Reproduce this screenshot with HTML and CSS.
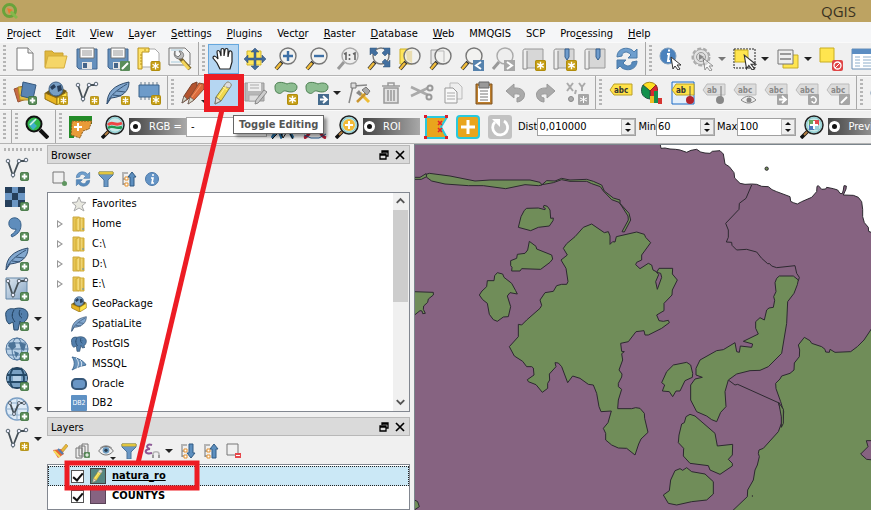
FILE: index.html
```html
<!DOCTYPE html>
<html lang="en">
<head>
<meta charset="utf-8">
<title>QGIS</title>
<link rel="stylesheet" href="styles.css">
</head>
<body>
<svg class="sprite" aria-hidden="true">
  <defs>
    <linearGradient id="steel" x1="0" y1="0" x2="1" y2="1"><stop offset="0" stop-color="#dfe8f1"/><stop offset="1" stop-color="#86a5c4"/></linearGradient>
    <linearGradient id="gold" x1="0" x2="1"><stop offset="0" stop-color="#e8c544"/><stop offset=".5" stop-color="#fbe9a0"/><stop offset="1" stop-color="#d9b02c"/></linearGradient>
  </defs>
  <symbol id="b-plus" viewBox="0 0 10 10"><rect x=".5" y=".5" width="9" height="9" rx="1.5" fill="#5a8c5a" stroke="#3f7440"/><path d="M5 2v6M2 5h6" stroke="#fff" stroke-width="2"/></symbol>
  <symbol id="b-star" viewBox="0 0 10 10"><rect x=".5" y=".5" width="9" height="9" rx="1" fill="#c8a117" stroke="#b08c0c"/><path d="M5 1.5v7M2 3.2l6 3.6M8 3.2l-6 3.6" stroke="#fff" stroke-width="1.3"/></symbol>
  <symbol id="b-gray" viewBox="0 0 10 10"><rect width="10" height="10" rx="1" fill="#a6a6a6"/></symbol>
  <symbol id="lens" viewBox="0 0 24 24"><path d="M8 15l-6 7" stroke="#303030" stroke-width="4"/><path d="M7 16l-5 6" stroke="#f1bd3c" stroke-width="2.5"/><circle cx="14" cy="9" r="8" fill="#f2f2f0" fill-opacity=".9" stroke="#777" stroke-width="1.4"/></symbol>
  <symbol id="lens-gray" viewBox="0 0 24 24"><path d="M8 15l-6 7" stroke="#999" stroke-width="3"/><circle cx="14" cy="9" r="8" fill="#eee" stroke="#aaa" stroke-width="1.4"/></symbol>
  <symbol id="lens-bold" viewBox="0 0 24 24"><path d="M8 16l-7 7" stroke="#111" stroke-width="3.5"/><path d="M8 16l-4 4" stroke="#b27d40" stroke-width="2"/><circle cx="14" cy="10" r="9" fill="#c9e8e7" stroke="#222" stroke-width="1.5"/><circle cx="14" cy="10" r="7.3" fill="none" stroke="#7bc8ce"/></symbol>
  <symbol id="new" viewBox="0 0 24 24"><path d="M4 1h11l5 5v17H4z" fill="#fff" stroke="#777"/><path d="M15 1v5h5" fill="#eee" stroke="#777"/></symbol>
  <symbol id="open" viewBox="0 0 24 24"><path d="M1 20V4h7l2 2h9v4" fill="#e0b83e" stroke="#c9a130"/><path d="M1 21L4 9h19l-3 12z" fill="#f5d668" stroke="#d4ad3d"/></symbol>
  <symbol id="save" viewBox="0 0 24 24"><path d="M2 2h20v20H4l-2-2z" fill="#6590bd" stroke="#436690"/><path d="M5 1h14v10H5z" fill="#fbfbfb" stroke="#777"/><path d="M7 4h10M7 6h10M7 8h10" stroke="#999"/><path d="M7 15h10v7H7z" fill="#e5e5e5"/><path d="M8 16h4v5H8z" fill="#44648a"/></symbol>
  <symbol id="saveas" viewBox="0 0 24 24"><use href="#save"/><rect x="14" y="14" width="10" height="10" rx="1" fill="#5a8c5a"/><path d="M16 22l6-6" stroke="#fff" stroke-width="2"/></symbol>
  <symbol id="layout" viewBox="0 0 24 24"><path d="M4 2h14l4 4v14H4z" fill="#fff" stroke="#aaa"/><path d="M1 1h11v4H5v17H1z" fill="#ffe36b" stroke="#b8921c"/><path d="M3 8h2M3 11h2M3 14h2M3 17h2M8 2v2" stroke="#b8921c"/><use href="#b-star" x="13" y="14" width="11" height="10"/></symbol>
  <symbol id="wrench" viewBox="0 0 24 24"><path d="M1 1h16l5 5v12H1z" fill="#f5f5f5" stroke="#777"/><path d="M3 3h12M3 15h14" stroke="#a6cadb"/><path d="M12 11l10 11" stroke="#776127" stroke-width="4"/><path d="M14 14l7 8" stroke="#f3d458" stroke-width="3"/><path d="M7 4v4l3 2 3-3-2-3c6 0 6 8 1 8-5 0-7-4-5-8z" fill="#bbb" stroke="#777"/></symbol>
  <symbol id="hand" viewBox="0 0 24 24"><path d="M8 22l-3-6-4-5c0-3 3-2 5 1L5 5c0-2 2-2 3 0l1 4V3c0-2 3-2 3 0v6l1-6c0-2 3-2 3 0v7l1-5c1-2 3-1 3 1v9l-2 7z" fill="#fff" stroke="#222" stroke-width="1.2"/></symbol>
  <symbol id="pan" viewBox="0 0 24 24"><path d="M4 4h14v14H4z" fill="#ffe65b" stroke="#d1b52c"/><path d="M12 1l4 4h-3v6h6V8l4 4-4 4v-3h-6v6h3l-4 4-4-4h3v-6H5v3l-4-4 4-4v3h6V5H8z" fill="#426b9a" stroke="#304d70" stroke-width=".5"/></symbol>
  <symbol id="zin" viewBox="0 0 24 24"><use href="#lens"/><path d="M14 4v10M9 9h10" stroke="#3d70a6" stroke-width="2.4"/></symbol>
  <symbol id="zout" viewBox="0 0 24 24"><use href="#lens"/><path d="M9 9h10" stroke="#3d70a6" stroke-width="2.4"/></symbol>
  <symbol id="z11" viewBox="0 0 24 24"><use href="#lens-gray"/><path d="M8 7l2-1v7M17 7l2-1v7M13.500 7v2M13.500 11v2" fill="none" stroke="#666" stroke-width="1.6"/></symbol>
  <symbol id="zfull" viewBox="0 0 24 24"><use href="#lens"/><path d="M3 1h7L8 3l3 3-3 3-3-3-2 2zM23 1v7l-2-2-3 3-3-3 3-3-2-2zM23 20h-7l2-2-3-3 3-3 3 3 2-2z" fill="#426f9f" stroke="#315579" stroke-width=".5"/></symbol>
  <symbol id="zsel" viewBox="0 0 24 24"><path d="M2 2h12v15H2z" fill="#ffe55a" stroke="#cdb126"/><use href="#lens"/><path d="M8 4h6v12l-5-3z" fill="#e9ddb1"/></symbol>
  <symbol id="zlayer" viewBox="0 0 24 24"><path d="M2 3h13v14H2z" fill="#e8e8e8" stroke="#999"/><use href="#lens"/><path d="M9 4h6v11" fill="none" stroke="#bbb"/></symbol>
  <symbol id="zlast" viewBox="0 0 24 24"><use href="#lens"/><path d="M13 13h11v11H13z" fill="#5682ad"/><path d="M21 15l-5 3.500 5 3.500" fill="none" stroke="#fff" stroke-width="2"/></symbol>
  <symbol id="znext" viewBox="0 0 24 24"><use href="#lens-gray"/><path d="M13 13h11v11H13z" fill="#a8a8a8"/><path d="M16 15l5 3.500-5 3.500" fill="none" stroke="#fff" stroke-width="2"/></symbol>
  <symbol id="book" viewBox="0 0 24 24"><path d="M4 2h17v19H4z" fill="#d7d7d7" stroke="#999"/><path d="M4 2c-3 0-3 1-3 3v17h4V4" fill="#eee" stroke="#888"/></symbol>
  <symbol id="bookstar" viewBox="0 0 24 24"><use href="#book"/><use href="#b-star" x="13" y="13" width="11" height="11"/></symbol>
  <symbol id="bookpin" viewBox="0 0 24 24"><use href="#book"/><path d="M12 2h4v8l-2 3-2-3z" fill="#6f9ccc" stroke="#345f8e"/></symbol>
  <symbol id="bookboth" viewBox="0 0 24 24"><use href="#bookpin"/><use href="#b-star" x="13" y="13" width="11" height="11"/></symbol>
  <symbol id="refresh" viewBox="0 0 24 24"><path d="M2 10C2 0 15-1 19 5l3-3v9h-9l3-3C12 3 7 5 7 9z" fill="#6f9fce" stroke="#4b7aa8"/><path d="M22 14c0 10-13 11-17 5l-3 3v-9h9l-3 3c4 5 9 3 9-1z" fill="#588bbd" stroke="#4b7aa8"/></symbol>
  <symbol id="cursor" viewBox="0 0 12 14"><path d="M1 1l10 8H7l3 4-2 1-3-4-2 3z" fill="#fff" stroke="#333"/></symbol>
  <symbol id="identify" viewBox="0 0 24 24"><circle cx="9" cy="9" r="8" fill="#4b82bd" stroke="#7f9dbb"/><path d="M9 3.500h2M8 7h2l-1 7h2" fill="none" stroke="#fff" stroke-width="2"/><use href="#cursor" x="11" y="9" width="12" height="14"/></symbol>
  <symbol id="gear" viewBox="0 0 24 24"><circle cx="11" cy="10" r="8.500" fill="#e6e6e6" stroke="#aaa" stroke-width="2" stroke-dasharray="4 2"/><circle cx="11" cy="10" r="7.500" fill="#e2e2e2" stroke="#aaa"/><circle cx="11" cy="10" r="4.500" fill="#ddd" stroke="#999"/><path d="M9 7l5 3-5 3z" fill="#888"/><g opacity=".5"><use href="#cursor" x="12" y="10" width="12" height="14"/></g></symbol>
  <symbol id="select" viewBox="0 0 24 24"><path d="M1 2h21v19H1z" fill="none" stroke="#222" stroke-dasharray="2 1"/><path d="M2 3h13v12H2z" fill="#ffe54f" stroke="#c8ad20"/><use href="#cursor" x="10" y="7" width="14" height="16"/></symbol>
  <symbol id="form" viewBox="0 0 24 24"><path d="M7 8h15v13H7z" fill="#ffe54f" stroke="#c7ad28"/><path d="M2 3h15v14H2z" fill="#eee" stroke="#777"/><path d="M4 7h11M4 12h11" stroke="#999" stroke-width="2"/></symbol>
  <symbol id="deselect" viewBox="0 0 24 24"><path d="M1 1h14v14H1z" fill="#ffe54f" stroke="#c8ad20"/><rect x="13" y="13" width="11" height="11" rx="2" fill="#df4546"/><circle cx="18.500" cy="18.500" r="3.500" fill="none" stroke="#fff" stroke-width="1.300"/><path d="M16 21l5-5" stroke="#fff"/></symbol>
  <symbol id="table" viewBox="0 0 24 24"><path d="M2 2h22v20H2z" fill="#fff" stroke="#6b8fb5"/><path d="M2 2h22v5H2z" fill="#5b8dc2"/><path d="M5 10h5M5 13h5M5 16h5M5 19h5M13 10h8M13 13h8M13 16h8M13 19h8" stroke="#8daecb"/></symbol>
  <symbol id="layers" viewBox="0 0 24 24"><path d="M1 8l12-4 3 13-11 4z" fill="#c76b42" stroke="#985236"/><path d="M5 6h13v13H7z" fill="#e3bf46" stroke="#b28d21"/><path d="M10 1l13 3-3 14-12-3z" fill="#5984b3" stroke="#35597f"/><use href="#b-plus" x="15" y="15" width="9" height="9"/></symbol>
  <symbol id="geopkg" viewBox="0 0 24 24"><path d="M1 12l11-8 11 6-9 9z" fill="#705a16"/><circle cx="12" cy="8" r="7" fill="#789fc5" stroke="#416286"/><path d="M6 6l4-3 2 3-4 3zM13 5l4-1 1 5-4 2z" fill="#283e5a"/><path d="M1 12l12 5v7L1 18z" fill="#e7b321" stroke="#8f6c10"/><path d="M13 17l10-6v7l-10 6z" fill="#ffe44a" stroke="#a17d15"/></symbol>
  <symbol id="newgeo" viewBox="0 0 24 24"><use href="#geopkg"/><use href="#b-star" x="15" y="15" width="9" height="9"/></symbol>
  <symbol id="vee" viewBox="0 0 24 24"><path d="M3 4l5 15 6-15h7" fill="none" stroke="#454f57" stroke-width="1.800"/><g fill="#eef" stroke="#586770"><circle cx="3" cy="4" r="1.800"/><circle cx="8" cy="18" r="1.800"/><circle cx="14" cy="4" r="1.800"/><circle cx="21" cy="3" r="1.800"/></g></symbol>
  <symbol id="veestar" viewBox="0 0 24 24"><use href="#vee"/><use href="#b-star" x="15" y="15" width="9" height="9"/></symbol>
  <symbol id="veeplus" viewBox="0 0 24 24"><use href="#vee"/><use href="#b-plus" x="15" y="15" width="9" height="9"/></symbol>
  <symbol id="feather" viewBox="0 0 24 24"><path d="M1 23C1 11 8 4 23 1c0 9-6 15-18 16z" fill="#82a7ce" stroke="#2f4b6b"/><path d="M1 23C4 14 11 9 21 3M7 14l8 1M11 10l8 1" fill="none" stroke="#365577"/></symbol>
  <symbol id="featherstar" viewBox="0 0 24 24"><use href="#feather"/><use href="#b-star" x="15" y="15" width="9" height="9"/></symbol>
  <symbol id="featherplus" viewBox="0 0 24 24"><use href="#feather"/><use href="#b-plus" x="15" y="15" width="9" height="9"/></symbol>
  <symbol id="chip" viewBox="0 0 24 24"><path d="M4 1v18M8 1v18M12 1v18M16 1v18M20 1v18" stroke="#697c8d"/><path d="M2 4h20v12H2z" fill="#6d9bc9" stroke="#3b628b"/><use href="#b-star" x="14" y="14" width="10" height="10"/></symbol>
  <symbol id="pencils" viewBox="0 0 24 24"><path d="M11 3l5-2v6L7 18l-6 4 2-7z" fill="#b3532e" stroke="#794028"/><path d="M18 2l5 1v5L13 19l-6 4 2-7z" fill="#dc6b3b" stroke="#8d4c31"/><path d="M11 16l9-12" stroke="#f09a6d"/><path d="M3 15l3 3-5 4zM9 16l4 3-6 4z" fill="#d7d7c8" stroke="#555" stroke-width=".6"/></symbol>
  <symbol id="pencil" viewBox="0 0 24 24"><path d="M14 2c2-2 6 0 5 3L9 20l-6 3 1-7z" fill="#f0d94c" stroke="#858344"/><path d="M14 2c2-2 6 0 5 3l-2 2-5-2z" fill="#ddd" stroke="#999"/><path d="M11 6l4 3M6 17l8-12" stroke="#fff19b"/><path d="M4 16l5 4-6 3z" fill="#e0ddd3" stroke="#777"/></symbol>
  <symbol id="savegray" viewBox="0 0 24 24"><path d="M2 2h19v18H2z" fill="#b7b7b7" stroke="#999"/><path d="M5 2h13v8H5z" fill="#eee"/><path d="M7 4h9M7 7h9M6 14h10v6H6z" fill="#ddd" stroke="#aaa"/><path d="M21 9l3 2-9 11-3 1 1-4z" fill="#ccc" stroke="#888"/></symbol>
  <symbol id="poly" viewBox="0 0 24 24"><path d="M1 5c1-5 8-4 12-2 4-2 10-1 10 3 0 5-6 6-11 4C8 9 8 14 4 12 1 11 1 8 1 5z" fill="#8dbd91" stroke="#4d8052"/></symbol>
  <symbol id="polystar" viewBox="0 0 24 24"><use href="#poly"/><use href="#b-star" x="13" y="13" width="11" height="11"/></symbol>
  <symbol id="polymove" viewBox="0 0 24 24"><use href="#poly"/><path d="M13 13h11v11H13z" fill="#456b8d"/><path d="M15 18.500h6M18 15l4 3.500-4 3.500" fill="none" stroke="#fff" stroke-width="1.800"/></symbol>
  <symbol id="node" viewBox="0 0 24 24"><path d="M1 22L5 5l14-1" fill="none" stroke="#888" stroke-width="1.500"/><path d="M3 2h5v5H3z" fill="#ddd" stroke="#777"/><path d="M12 12l9 9" stroke="#efbd34" stroke-width="3"/><path d="M9 21l9-9" stroke="#c9952f" stroke-width="2.500"/><path d="M14 9l4-3 4 4-3 4z" fill="#aaa" stroke="#777"/><path d="M8 12l3-3 3 4-2 2z" fill="#888"/></symbol>
  <symbol id="trash" viewBox="0 0 24 24"><path d="M5 7h14v15H5z" fill="#e2e2e2" stroke="#999" stroke-width="1.500"/><path d="M3 5h18M9 5V2h6v3M9 9v11M12 9v11M15 9v11" fill="none" stroke="#999" stroke-width="1.500"/></symbol>
  <symbol id="cut" viewBox="0 0 24 24"><path d="M1 6l17 8M1 15L20 6" stroke="#aaa" stroke-width="2.500"/><circle cx="20" cy="7" r="2.500" fill="#eee" stroke="#999" stroke-width="2"/><circle cx="19" cy="16" r="2.500" fill="#eee" stroke="#999" stroke-width="2"/></symbol>
  <symbol id="copy" viewBox="0 0 24 24"><path d="M9 2h8l4 4v12H9z" fill="#eee" stroke="#bbb"/><path d="M4 7h8l4 4v11H4z" fill="#f8f8f8" stroke="#999"/><path d="M6 12h8M6 15h8M6 18h8" stroke="#aaa"/></symbol>
  <symbol id="paste" viewBox="0 0 24 24"><path d="M4 3h16v20H4z" fill="#bd7e2c" stroke="#805520"/><path d="M6 5h12v16H6z" fill="#fff"/><path d="M7 1h10v6H7z" fill="#999" stroke="#666"/><path d="M8 10h8M8 13h8M8 16h8M8 19h8" stroke="#777"/></symbol>
  <symbol id="undo" viewBox="0 0 24 24"><path d="M3 10l8-7v4c14-1 13 13 3 14v-4c5-1 4-5-3-4v4z" fill="#aaa" stroke="#999"/></symbol>
  <symbol id="redo" viewBox="0 0 24 24"><path d="M21 10l-8-7v4C-1 6 0 20 10 21v-4c-5-1-4-5 3-4v4z" fill="#aaa" stroke="#999"/></symbol>
  <symbol id="xy" viewBox="0 0 24 24"><path d="M2 2l6 8M8 2L2 10M14 2l3 4v4M20 2l-3 4M11 9l-1 4" fill="none" stroke="#aaa" stroke-width="2"/><circle cx="6" cy="18" r="2.500" fill="#aaa" stroke="#888"/><use href="#b-gray" x="13" y="13" width="11" height="11"/><path d="M18.500 15v7M15 17l7 3M22 17l-7 3" stroke="#fff"/></symbol>
  <symbol id="pie" viewBox="0 0 24 24"><path d="M10 10L3 4a9 9 0 0 1 13 0z" fill="#ffdf22" stroke="#a88b19"/><path d="M10 10l6-6c3 5 2 9-6 14z" fill="#d8272f" stroke="#822"/><path d="M3 4l7 6v8C1 17 0 9 3 4z" fill="#12904c" stroke="#254"/><path d="M10 15h4v7h-4z" fill="#efbc22"/><path d="M14 10h4v12h-4z" fill="#168e4e"/><path d="M18 17h4v6h-4z" fill="#d73531"/></symbol>
  <symbol id="tag" viewBox="0 0 24 24"><path d="M1 9l4-6h18v11H5z" fill="#ffe249" stroke="#baa029"/></symbol>
  <symbol id="taggray" viewBox="0 0 24 24"><path d="M1 9l4-6h18v11H5z" fill="#ddd" stroke="#bbb"/></symbol>
  <symbol id="eye" viewBox="0 0 24 24"><path d="M1 12c6-9 16-9 22 0-6 8-16 8-22 0z" fill="#eee" stroke="#777" stroke-width="1.500"/><circle cx="12" cy="11" r="5" fill="#6c9bc0"/><circle cx="12" cy="11" r="2.500" fill="#263b4d"/><path d="M3 8c5-5 13-5 18 0" fill="none" stroke="#555"/></symbol>
  <symbol id="globe" viewBox="0 0 24 24"><circle cx="12" cy="12" r="11" fill="#b9d1e7" stroke="#53789e"/><ellipse cx="12" cy="12" rx="5" ry="11" fill="none" stroke="#53789e"/><path d="M1 12h22M3 6h18M3 18h18" stroke="#53789e"/><path d="M4 6l6-1 1 5-4 3-4-4zM14 5l7 2-2 7-3-2zM9 14l5 2-3 5z" fill="#4b7398"/></symbol>
  <symbol id="globeplus" viewBox="0 0 24 24"><use href="#globe"/><use href="#b-plus" x="15" y="15" width="9" height="9"/></symbol>
  <symbol id="globedark" viewBox="0 0 24 24"><circle cx="12" cy="11" r="10.500" fill="#244967" stroke="#233f59"/><path d="M5 3h14l2 4H3zM2 9h20v5H2zM3 16h18l-4 4H7z" fill="#78a0c2"/><path d="M8 1c-4 6-4 15 0 20M16 1c4 6 4 15 0 20" fill="none" stroke="#244967" stroke-width="1.800"/><path d="M8 9h8v5H8z" fill="#b4cfe5"/><use href="#b-plus" x="15" y="15" width="9" height="9"/></symbol>
  <symbol id="globevee" viewBox="0 0 24 24"><circle cx="12" cy="12" r="11" fill="#deebf7" stroke="#7b9fc4" stroke-width="1.500"/><path d="M1 12h22M12 1v22M4 6h16M4 18h16" stroke="#8eaecb"/><path d="M5 6l4 11 5-11h5" fill="none" stroke="#454f57" stroke-width="1.800"/><g fill="#eef" stroke="#586770"><circle cx="5" cy="6" r="1.500"/><circle cx="9" cy="17" r="1.500"/><circle cx="14" cy="6" r="1.500"/><circle cx="19" cy="6" r="1.500"/></g><use href="#b-plus" x="15" y="15" width="9" height="9"/></symbol>
  <symbol id="raster" viewBox="0 0 24 24"><path d="M0 0h20v20H0z" fill="#6b96c4"/><path d="M0 0h7v6H0zM13 0h7v6h-7zM7 6h6v7H7zM0 13h7v7H0zM13 13h7v7h-7z" fill="#253f5b"/><use href="#b-plus" x="15" y="15" width="9" height="9"/></symbol>
  <symbol id="comma" viewBox="0 0 24 24"><path d="M4 5c1-6 12-6 12 3 0 7-5 10-9 12l-1-2c3-2 5-4 5-6-4 1-8-2-7-7z" fill="#5f8dbc" stroke="#365f88"/><use href="#b-plus" x="15" y="15" width="9" height="9"/></symbol>
  <symbol id="virtual" viewBox="0 0 24 24"><path d="M1 1h21v21H1z" fill="url(#steel)" stroke="#6487a7"/><use href="#veeplus"/></symbol>
  <symbol id="elephant" viewBox="0 0 24 24"><path d="M1 10C-1 2 6 1 9 2c5-2 14-1 14 6 0 3-2 6-4 7l2 2-4 1-2-4-2 9H9l-1-8-4 2C2 15 1 13 1 10z" fill="#537fac" stroke="#27496a"/><path d="M9 3c-3 5-2 8 1 12M15 3c-2 4 0 7 2 8M7 8h1M16 7h1" fill="none" stroke="#203e5b"/></symbol>
  <symbol id="elephantplus" viewBox="0 0 24 24"><use href="#elephant"/><use href="#b-plus" x="15" y="15" width="9" height="9"/></symbol>
  <symbol id="mag-green" viewBox="0 0 24 24"><path d="M15 15l8 8" stroke="#111" stroke-width="4"/><circle cx="9" cy="9" r="7.500" fill="#32b74b" stroke="#111" stroke-width="2"/><path d="M4 10c2-5 5-6 8-6L9 8l3 3-4 4z" fill="#3fb0c9"/><path d="M5 10l6-6" stroke="#d9f6df" stroke-width="1.500"/></symbol>
  <symbol id="scp" viewBox="0 0 24 24"><path d="M0 1h23v8H0zM0 8h5v15H0z" fill="#238b28"/><path d="M3 6h20l-3 8-6 2-3 7-9-3z" fill="#e99b38" stroke="#8a5c1e" stroke-dasharray="2 1"/><path d="M9 8v8M5 12h8" stroke="#fff" stroke-width="2"/></symbol>
  <symbol id="mag-rgb" viewBox="0 0 24 24"><use href="#lens-bold"/><path d="M7 10c5-5 6 2 14-2" fill="none" stroke="#f04645" stroke-width="3"/><path d="M7 13c5-4 7 2 14-1" fill="none" stroke="#239850" stroke-width="2.500"/></symbol>
  <symbol id="mag-roi" viewBox="0 0 24 24"><use href="#lens-bold"/><circle cx="14" cy="10" r="6" fill="#f2ba37"/><path d="M14 6v8M10 10h8" stroke="#fff" stroke-width="2"/></symbol>
  <symbol id="mag-prev" viewBox="0 0 24 24"><use href="#lens-bold"/><path d="M9 5h5v5H9z" fill="#68a85e"/><path d="M14 5h5v5h-5z" fill="#e44c50"/><path d="M9 10h5v5H9z" fill="#4d78bb"/><path d="M14 10h5v5h-5z" fill="#9ad0d8"/><path d="M14 6v8M10 10h8" stroke="#fff" stroke-width="2"/></symbol>
  <symbol id="roi" viewBox="0 0 24 24"><path d="M2 2h21l-6 10 6 11H2z" fill="#e9a51d" stroke="#29c9dd" stroke-width="2"/><path d="M14 6l4 4M18 6l-4 4M14 13l4 4M18 13l-4 4" stroke="#e2202b" stroke-width="1.500"/><path d="M0 0h3v3H0zM21 0h3v3h-3zM0 21h3v3H0zM21 21h3v3h-3z" fill="#dc1d29"/></symbol>
  <symbol id="plus-big" viewBox="0 0 24 24"><rect x="1" y="1" width="22" height="22" rx="3" fill="#e9a51d" stroke="#29c9dd" stroke-width="2"/><path d="M12 5v14M5 12h14" stroke="#fff" stroke-width="3"/></symbol>
  <symbol id="reset" viewBox="0 0 24 24"><rect width="24" height="24" rx="3" fill="#c2c2c2"/><path d="M16 6a7.500 7.500 0 1 1-9 1" fill="none" stroke="#fff" stroke-width="2.800"/><path d="M4 4h8v8z" fill="#fff"/></symbol>
  <symbol id="addsel" viewBox="0 0 16 16"><path d="M1 1h11v11H1z" fill="#f0f0f0" stroke="#777"/><circle cx="12.500" cy="12.500" r="2.500" fill="#5f9660"/></symbol>
  <symbol id="filter" viewBox="0 0 16 16"><path d="M1 1h14v3l-5 5v7H6V9L1 4z" fill="#6997c5" stroke="#4a7299"/><path d="M1 1h14v2H1z" fill="#ffe453" stroke="#c1a62c"/></symbol>
  <symbol id="collapse" viewBox="0 0 16 16"><path d="M1 2h6M2 3v11M2 8h4M2 13h4" fill="none" stroke="#777"/><path d="M4 6h3v3H4zM4 12h3v3H4z" fill="#fff" stroke="#e3902c"/><path d="M11 1l4 5h-2v9H9V6H7z" fill="#5d8fbf" stroke="#315b83"/></symbol>
  <symbol id="expand" viewBox="0 0 16 16"><path d="M1 2h6M2 3v11M2 8h4M2 13h4" fill="none" stroke="#777"/><path d="M4 6h3v3H4zM4 12h3v3H4z" fill="#fff" stroke="#e3902c"/><path d="M11 15l4-5h-2V1H9v9H7z" fill="#5d8fbf" stroke="#315b83"/></symbol>
  <symbol id="info" viewBox="0 0 16 16"><circle cx="8" cy="8" r="6.500" fill="#6494c6" stroke="#4b78a8"/><path d="M8 4h2M7 7h2l-1 5h2" stroke="#fff" fill="none" stroke-width="1.600"/></symbol>
  <symbol id="star" viewBox="0 0 16 16"><path d="M8 1l2 5 5 .5-4 3.500 2 5-5-3-5 3 2-5-4-3.500L6 6z" fill="#e8e8e0" stroke="#aaa"/></symbol>
  <symbol id="folder" viewBox="0 0 16 16"><path d="M2 1h6v14H2z" fill="#e6c451" stroke="#caa845"/><path d="M5 3l4-2v14l-4-1zM9 2h4v13H9z" fill="url(#gold)" stroke="#d2ad3d"/><path d="M12 12v2" stroke="#5490bd"/></symbol>
  <symbol id="mssql" viewBox="0 0 16 16"><path d="M1 1c6 1 12 4 14 8-4 1-9 2-14 5 3-4 3-9 0-13z" fill="#6792bb" stroke="#416b94"/><path d="M5 2c3 3 3 7 1 10M9 4c2 2 2 4 1 7" fill="none" stroke="#dce7f3"/></symbol>
  <symbol id="oracle" viewBox="0 0 16 16"><rect x="1" y="3" width="14" height="10" rx="4" fill="#6996c6" stroke="#365779" stroke-width="2"/></symbol>
  <symbol id="brush" viewBox="0 0 16 16"><path d="M9 7l5-6 2 2-5 6z" fill="#e7b939" stroke="#a87b20" stroke-width=".5"/><path d="M1 7l8-1 3 5-6 4z" fill="#e46737"/><path d="M2 8l6 6" stroke="#f5dc5a" stroke-width="2"/><path d="M6 6l5 5" stroke="#537eb0" stroke-width="2"/></symbol>
  <symbol id="addgroup" viewBox="0 0 16 16"><path d="M7 1h6v10H7zM4 3h6v10H4zM1 5h6v10H1z" fill="#eee" stroke="#777"/><use href="#b-plus" x="9" y="9" width="6" height="6"/></symbol>
  <symbol id="removesel" viewBox="0 0 16 16"><path d="M1 1h11v11H1z" fill="#f0f0f0" stroke="#777"/><path d="M9 10h6v5H9z" fill="#e6484c"/><path d="M10 12.500h4" stroke="#fff"/></symbol>
  <symbol id="epsilon" viewBox="0 0 16 16"><path d="M8 2C3 0 1 5 6 6 0 6 0 12 8 10" fill="none" stroke="#8c5795" stroke-width="2"/><path d="M9 15v-4c0-3 6-3 6 0v4" fill="none" stroke="#b5b5b5" stroke-width="1.600"/><path d="M9 12v3M15 12v3" stroke="#999" stroke-width="2"/></symbol>
  <symbol id="float" viewBox="0 0 10 10"><path d="M3 3V1h6v5H7M1 4h6v5H1zM1 5h6M3 2h6" fill="none" stroke="#000" stroke-width="1.300"/></symbol>
  <symbol id="close" viewBox="0 0 10 10"><path d="M1 1l8 8M9 1L1 9" stroke="#000" stroke-width="1.700"/></symbol>
</svg>

<div class="window">
  <header class="titlebar">
    <svg class="logo" viewBox="0 0 16 16"><circle cx="7.500" cy="7.500" r="6" fill="none" stroke="#69a33b" stroke-width="3"/><path d="M8 8l7 7" stroke="#85b84b" stroke-width="3"/><path d="M5 5l6 2-2 1-2 3z" fill="#e77b30"/></svg>
    <h1>QGIS</h1>
  </header>
  <nav class="menubar">
    <a href="#"><u>P</u>roject</a><a href="#"><u>E</u>dit</a><a href="#"><u>V</u>iew</a><a href="#"><u>L</u>ayer</a><a href="#"><u>S</u>ettings</a><a href="#"><u>P</u>lugins</a><a href="#">Vect<u>o</u>r</a><a href="#"><u>R</u>aster</a><a href="#"><u>D</u>atabase</a><a href="#"><u>W</u>eb</a><a href="#">MMQGIS</a><a href="#">SCP</a><a href="#">Pro<u>c</u>essing</a><a href="#"><u>H</u>elp</a>
  </nav>

  <div class="row">
    <div class="toolbar">
      <button aria-label="New project"><svg><use href="#new"/></svg></button>
      <button aria-label="Open project"><svg><use href="#open"/></svg></button>
      <button aria-label="Save project"><svg><use href="#save"/></svg></button>
      <button aria-label="Save project as"><svg><use href="#saveas"/></svg></button>
      <button aria-label="New print layout"><svg><use href="#layout"/></svg></button>
      <button aria-label="Layout manager"><svg><use href="#wrench"/></svg></button>
    </div>
    <div class="toolbar">
      <button class="active" aria-label="Pan map"><svg><use href="#hand"/></svg></button>
      <button aria-label="Pan to selection"><svg><use href="#pan"/></svg></button>
      <button aria-label="Zoom in"><svg><use href="#zin"/></svg></button>
      <button aria-label="Zoom out"><svg><use href="#zout"/></svg></button>
      <button aria-label="Native resolution"><svg><use href="#z11"/></svg></button>
      <button aria-label="Zoom full"><svg><use href="#zfull"/></svg></button>
      <button aria-label="Zoom to selection"><svg><use href="#zsel"/></svg></button>
      <button aria-label="Zoom to layer"><svg><use href="#zlayer"/></svg></button>
      <button aria-label="Zoom last"><svg><use href="#zlast"/></svg></button>
      <button aria-label="Zoom next"><svg><use href="#znext"/></svg></button>
      <button aria-label="New map view"><svg><use href="#bookstar"/></svg></button>
      <button aria-label="New bookmark"><svg><use href="#bookboth"/></svg></button>
      <button aria-label="Show bookmarks"><svg><use href="#bookpin"/></svg></button>
      <button aria-label="Refresh"><svg><use href="#refresh"/></svg></button>
    </div>
    <div class="toolbar">
      <button aria-label="Identify"><svg><use href="#identify"/></svg></button>
      <button class="drop dim" aria-label="Run action"><svg><use href="#gear"/></svg></button>
      <button class="drop" aria-label="Select features"><svg><use href="#select"/></svg></button>
      <button class="drop" aria-label="Select by value"><svg><use href="#form"/></svg></button>
      <button aria-label="Deselect"><svg><use href="#deselect"/></svg></button>
      <button aria-label="Attribute table"><svg><use href="#table"/></svg></button>
    </div>
  </div>

  <div class="row">
    <div class="toolbar">
      <button aria-label="Data source manager"><svg><use href="#layers"/></svg></button>
      <button aria-label="New GeoPackage"><svg><use href="#newgeo"/></svg></button>
      <button aria-label="New shapefile"><svg><use href="#veestar"/></svg></button>
      <button aria-label="New SpatiaLite"><svg><use href="#featherstar"/></svg></button>
      <button aria-label="New scratch layer"><svg><use href="#chip"/></svg></button>
    </div>
    <div class="toolbar">
      <button class="corner" aria-label="Current edits"><svg><use href="#pencils"/></svg></button>
      <button class="active" aria-label="Toggle Editing"><svg><use href="#pencil"/></svg></button>
      <button aria-label="Save edits"><svg><use href="#savegray"/></svg></button>
      <button aria-label="Add polygon"><svg><use href="#polystar"/></svg></button>
      <button class="drop" aria-label="Move feature"><svg><use href="#polymove"/></svg></button>
      <button aria-label="Vertex tool"><svg><use href="#node"/></svg></button>
      <button aria-label="Delete"><svg><use href="#trash"/></svg></button>
      <button aria-label="Cut"><svg><use href="#cut"/></svg></button>
      <button aria-label="Copy"><svg><use href="#copy"/></svg></button>
      <button aria-label="Paste"><svg><use href="#paste"/></svg></button>
      <button aria-label="Undo"><svg><use href="#undo"/></svg></button>
      <button aria-label="Redo"><svg><use href="#redo"/></svg></button>
      <button aria-label="Coordinates"><svg><use href="#xy"/></svg></button>
    </div>
    <div class="toolbar">
      <button aria-label="Label options"><svg viewBox="0 0 24 24"><use href="#tag"/><text class="abc" x="5" y="12">abc</text></svg></button>
      <button aria-label="Diagrams"><svg><use href="#pie"/></svg></button>
      <button aria-label="Pin labels"><svg viewBox="0 0 24 24"><path d="M1 1h22v22H1z" fill="#e4effa" stroke="#1b6ac6"/><use href="#tag"/><text class="abc" x="5" y="12">ab</text><path d="M19 5v11" stroke="#555"/><circle cx="19" cy="19" r="4" fill="#b4232b"/></svg></button>
      <button aria-label="Unpin labels"><svg viewBox="0 0 24 24"><use href="#taggray"/><text class="abc off" x="5" y="12">ab</text><path d="M19 5v11" stroke="#777"/><circle cx="18" cy="19" r="4" fill="#888"/></svg></button>
      <button aria-label="Show labels"><svg viewBox="0 0 24 24"><use href="#taggray"/><text class="abc off" x="5" y="12">abc</text><path d="M8 19c5-5 10-5 15 0-5 4-10 4-15 0z" fill="#eee" stroke="#888"/><circle cx="16" cy="19" r="2.500" fill="#888"/></svg></button>
      <button aria-label="Move label"><svg viewBox="0 0 24 24"><use href="#taggray"/><text class="abc off" x="5" y="12">abc</text><use href="#b-gray" x="13" y="13" width="11" height="11"/><path d="M15 18.500h6M18 15l4 3.500-4 3.500" fill="none" stroke="#fff" stroke-width="1.800"/></svg></button>
      <button aria-label="Rotate label"><svg viewBox="0 0 24 24"><use href="#taggray"/><text class="abc off" x="5" y="12">abc</text><use href="#b-gray" x="13" y="13" width="11" height="11"/><path d="M16 17c2-3 6 0 5 3s-4 2-4 0" fill="none" stroke="#fff" stroke-width="1.500"/></svg></button>
      <button aria-label="Change label"><svg viewBox="0 0 24 24"><use href="#taggray"/><text class="abc off" x="5" y="12">abc</text><use href="#b-gray" x="13" y="13" width="11" height="11"/><path d="M15 22l6-6" stroke="#fff" stroke-width="2"/></svg></button>
    </div>
    <div class="toolbar">
      <button aria-label="Web search"><svg><use href="#globe"/></svg></button>
    </div>
  </div>

  <div class="row">
    <div class="toolbar empty"></div>
    <div class="toolbar wide"><button aria-label="Search"><svg><use href="#mag-green"/></svg></button></div>
    <div class="toolbar scp">
      <button aria-label="SCP dock"><svg><use href="#scp"/></svg></button>
      <button aria-label="Zoom to image"><svg><use href="#mag-rgb"/></svg></button>
      <label class="band"><input type="radio"><span>RGB =</span></label>
      <select class="combo" aria-label="RGB composite"><option>-</option></select>
      <button aria-label="Local stretch"><svg viewBox="0 0 24 24"><path d="M1 23l6-10 3 8 4-13 8 15" fill="none" stroke="#236a9c" stroke-width="3"/><path d="M1 24l8-8 3 7 5-8 5 9" fill="none" stroke="#111"/></svg></button>
      <button aria-label="Deviation stretch"><svg viewBox="0 0 24 24"><path d="M1 23c7-2 7-13 11-13s4 11 11 13" fill="none" stroke="#b41f37" stroke-width="3"/><path d="M1 20l7 3h8l7-4" fill="none" stroke="#225890"/></svg></button>
      <button aria-label="Zoom to ROI"><svg><use href="#mag-roi"/></svg></button>
      <label class="band"><input type="radio"><span>ROI</span></label>
      <button aria-label="Create ROI"><svg><use href="#roi"/></svg></button>
      <button aria-label="Add ROI"><svg><use href="#plus-big"/></svg></button>
      <button aria-label="Redo ROI"><svg><use href="#reset"/></svg></button>
      <label class="spin long"><span>Dist</span><input type="text" value="0,010000"><i></i></label>
      <label class="spin"><span>Min</span><input type="text" value="60"><i></i></label>
      <label class="spin"><span>Max</span><input type="text" value="100"><i></i></label>
      <button aria-label="Zoom to preview"><svg><use href="#mag-prev"/></svg></button>
      <label class="band"><input type="radio"><span>Preview</span></label>
    </div>
  </div>

  <main>
    <aside class="sources">
      <button aria-label="Add vector"><svg><use href="#veeplus"/></svg></button>
      <button aria-label="Add raster"><svg><use href="#raster"/></svg></button>
      <button aria-label="Add delimited text"><svg><use href="#comma"/></svg></button>
      <button aria-label="Add SpatiaLite"><svg><use href="#featherplus"/></svg></button>
      <button aria-label="Add virtual layer"><svg><use href="#virtual"/></svg></button>
      <button class="drop" aria-label="Add PostGIS"><svg><use href="#elephantplus"/></svg></button>
      <button class="drop" aria-label="Add WMS"><svg><use href="#globeplus"/></svg></button>
      <button aria-label="Add WCS"><svg><use href="#globedark"/></svg></button>
      <button class="drop" aria-label="Add WFS"><svg><use href="#globevee"/></svg></button>
      <button class="drop" aria-label="New vector"><svg><use href="#veestar"/></svg></button>
    </aside>

    <div class="docks">
      <section class="dock">
        <header><h2>Browser</h2><button aria-label="Float"><svg><use href="#float"/></svg></button><button aria-label="Close"><svg><use href="#close"/></svg></button></header>
        <div class="tools">
          <button aria-label="Add"><svg><use href="#addsel"/></svg></button>
          <button aria-label="Refresh"><svg><use href="#refresh"/></svg></button>
          <button aria-label="Filter"><svg><use href="#filter"/></svg></button>
          <button aria-label="Collapse all"><svg><use href="#collapse"/></svg></button>
          <button aria-label="Properties"><svg><use href="#info"/></svg></button>
        </div>
        <div class="view">
          <ul class="tree">
            <li><svg><use href="#star"/></svg>Favorites</li>
            <li class="node"><svg><use href="#folder"/></svg>Home</li>
            <li class="node"><svg><use href="#folder"/></svg>C:\</li>
            <li class="node"><svg><use href="#folder"/></svg>D:\</li>
            <li class="node"><svg><use href="#folder"/></svg>E:\</li>
            <li><svg><use href="#geopkg"/></svg>GeoPackage</li>
            <li><svg><use href="#feather"/></svg>SpatiaLite</li>
            <li><svg><use href="#elephant"/></svg>PostGIS</li>
            <li><svg><use href="#mssql"/></svg>MSSQL</li>
            <li><svg><use href="#oracle"/></svg>Oracle</li>
            <li><span class="db2">DB2</span>DB2</li>
          </ul>
          <div class="scroll">
            <svg viewBox="0 0 16 17"><path d="M4 10l4-4 4 4" fill="none" stroke="#555" stroke-width="2"/></svg>
            <div class="thumb"></div>
            <svg viewBox="0 0 16 17"><path d="M4 6l4 4 4-4" fill="none" stroke="#555" stroke-width="2"/></svg>
          </div>
        </div>
      </section>
      <section class="dock grow">
        <header><h2>Layers</h2><button aria-label="Float"><svg><use href="#float"/></svg></button><button aria-label="Close"><svg><use href="#close"/></svg></button></header>
        <div class="tools">
          <button aria-label="Style"><svg><use href="#brush"/></svg></button>
          <button aria-label="Add group"><svg><use href="#addgroup"/></svg></button>
          <button class="corner" aria-label="Visibility"><svg><use href="#eye"/></svg></button>
          <button aria-label="Filter legend"><svg><use href="#filter"/></svg></button>
          <button class="drop" aria-label="Filter by expression"><svg><use href="#epsilon"/></svg></button>
          <button aria-label="Expand all"><svg><use href="#expand"/></svg></button>
          <button aria-label="Collapse all"><svg><use href="#collapse"/></svg></button>
          <button aria-label="Remove layer"><svg><use href="#removesel"/></svg></button>
        </div>
        <div class="view">
          <div class="layers">
            <label class="selected"><input type="checkbox" checked><span class="swatch edit"><svg><use href="#pencil"/></svg></span><u>natura_ro</u></label>
            <label><input type="checkbox" checked><span class="swatch"></span>COUNTYS</label>
          </div>
        </div>
      </section>
    </div>

    <div class="canvas">
      <svg viewBox="15 15 1368 1095" preserveAspectRatio="xMinYMin slice" role="img" aria-label="Map">
        <g class="land"><path d="M10 10H750L753 25 765 24 780 27 797 28 810 30 830 37 843 31 860 28 872 36 885 39 900 40 907 34 930 32 940 42 945 72 958 80 972 98 974 114 990 130 1005 133 1025 132 1040 133 1055 139 1075 140 1086 149 1100 155 1140 170 1142 184 1150 188 1162 192 1175 185 1205 172 1220 155 1221 139 1225 137 1235 148 1247 147 1250 142 1270 146 1283 150 1290 160 1297 161 1300 150 1302 137 1309 138 1308 147 1300 165 1330 166 1345 172 1355 185 1358 208 1358 230 1363 248 1375 262 1376 274 1390 280V1120H10z"/></g>
        <g class="line"><path d="M1025 135L1008 175 988 190 987 208 947 250 955 270 955 292 949 306 965 307 966 316 980 330 1010 328 1040 336 1055 355 1073 371 1079 371 1085 378 1100 383 1155 377 1160 400 1168 412 1165 423M955 720L975 735 983 733 1105 788 1114 815 1115 865"/></g>
        <g class="park">
          <path d="M48 103L58 100 120 108 195 123 240 120 360 120 390 127 396 135 385 137 345 134 287 146 220 137 175 137 105 132 65 123 50 112z"/>
          <path d="M10 112H30L48 101 50 110 34 118H10zM396 134L410 122 435 123 455 115 480 120 530 118 550 124 575 135 583 153 610 174 630 180 630 190 657 220 662 240 643 276 636 275 655 240 654 228 635 198 627 187 605 179 580 153 571 140 545 131 530 124 480 124 455 119 430 128z"/>
          <path d="M350 205L385 204 405 209 406 205 400 202 402 196 412 199 420 210 422 235 430 234 429 242 418 258 385 262 362 272 325 262 333 230 343 211z"/>
          <path d="M358 304L378 319 380 327 425 345 428 357 420 367 392 388 335 386 330 393 305 393 306 382 302 377 302 362 320 355 322 343 345 340 353 330z"/>
          <path d="M262 398L278 402 282 412 305 430 317 452 322 462 300 458 292 468 302 500 295 530 280 531 262 544 250 539 238 523 232 490 218 479 208 465 216 453 230 440 232 422 252 422 254 407z"/>
          <path d="M10 455L70 457 70 465 55 477 53 487 41 498 40 508 46 520 38 521 36 513 30 512 10 528zM10 1078L23 1085 28 1100 10 1112z"/>
          <path d="M545 252L583 278 595 275 600 288 600 313 608 305 615 306 619 290 680 276 703 283 707 292 722 308 706 330 695 345 695 360 680 367 677 374 690 386 715 370 725 375 729 390 739 395 746 404 737 425 742 448 755 412 752 400 740 397 747 385 788 385 787 402 802 420 787 450 786 465 762 490 762 512 740 525 747 542 760 544 775 541 778 548 755 565 715 585 705 585 702 572 678 575 655 605 632 610 635 634 643 635 635 641 638 660 627 690 636 702 635 711 625 730 625 740 635 748 625 780 623 806 665 806 677 803 690 805 703 820 704 835 714 877 693 897 686 912 675 945 650 925 625 924 605 915 587 900 587 880 580 865 594 848 604 813 573 815 567 800 560 760 550 735 535 733 510 715 488 708 473 728 455 680 445 669 435 668 438 680 418 702 419 720 413 730 413 745 397 757 378 734 355 725 352 719 372 705 370 684 365 680 350 680 338 664 313 648 298 620 325 590 325 553 335 555 350 540 390 505 395 496 390 480 405 458 430 454 440 437 455 433 470 433 474 425 468 385 453 360 472 345 460 325 470 311 495 290 520 262z"/>
          <path d="M1100 415L1108 408 1150 408 1165 420 1162 434 1152 460 1133 485 1130 550 1115 640 1075 680 1050 691 1020 692 980 702 955 720 945 755 948 800 932 817 920 845 905 839 890 828 860 815 842 780 842 735 855 717 877 712 858 705 858 685 870 660 920 632 940 629 975 608 980 635 988 637 991 618 1025 622 1028 612 1000 604 1045 582 1037 565 1037 545 1050 533 1063 540 1070 510 1077 504 1090 502 1094 481 1091 470 1098 455 1095 428z"/>
          <path d="M790 675L830 667 842 675 848 700 847 712 825 722 810 753 798 753 788 770 778 755 757 753 764 735 755 728 770 695zM840 823L855 828 915 880 922 918 968 913 967 945 955 958 967 970 967 978 930 1003 900 990 895 977 840 970 820 948 821 925 805 908 807 885 815 852 823 848 828 830zM795 992L810 986 818 991 830 983 845 995 885 1002 910 1025 910 1062 890 1080 845 1085 800 1095 775 1090 760 1065 778 1052 782 1020z"/>
          <path d="M1390 558L1362 600 1342 620 1322 635 1275 637 1260 628 1258 637 1247 636 1245 628 1235 620 1205 610 1200 602 1183 592 1165 615 1169 630 1168 650 1153 669 1152 690 1140 700 1115 708 1110 717 1097 730 1098 746 1112 785 1121 815 1120 835 1105 875 1060 925 1047 930 1045 940 1048 950 1042 975 1035 990 1030 1020 1013 1050 1012 1070 968 1112H1390V960L1370 958 1352 942 1374 920 1369 902H1390z"/>
          <circle cx="1070" cy="86" r="5"/><circle cx="1027" cy="1068" r="1"/>
          <path d="M1106 787L1120 808V850L1114 862 1114 830z"/>
        </g>
      </svg>
    </div>
  </main>

  <div class="tooltip" role="tooltip">Toggle Editing</div>
  <svg class="marks" viewBox="0 0 871 510" aria-hidden="true"><path d="M222 110L138 463" stroke-width="5"/><path d="M207 77h34v32h-34z" stroke-width="6"/><path d="M67 463h130v25H67z" stroke-width="5"/></svg>
</div>
</body>
</html>
```
FILE: styles.css
```css
* { box-sizing: border-box; }
body { margin: 0; font: 11px/14px "DejaVu Sans Condensed", "DejaVu Sans", sans-serif; color: #000; background: #f0f0f0; }
button { border: 0; padding: 0; background: none; font: inherit; flex: none; position: relative; display: flex; align-items: center; justify-content: center; }
h1, h2, ul { margin: 0; padding: 0; font-weight: normal; }
.sprite { position: absolute; width: 0; height: 0; }
.window { position: relative; height: 100vh; display: flex; flex-direction: column; overflow: hidden; }

.titlebar { height: 22px; flex: none; background: #bda362; display: flex; align-items: center; justify-content: space-between; padding: 0 15px 0 2px; }
.titlebar h1 { font: 15px/20px "Open Sans", "Noto Sans", sans-serif; color: #3a3221; }
.logo { width: 16px; height: 16px; }
.menubar { height: 20px; flex: none; display: flex; background: #f5f6f8; }
.menubar a { color: #000; text-decoration: none; padding: 5px 8px 0 7px; }

.row { height: 34px; flex: none; display: flex; border-bottom: 1px solid #b4b4b4; box-shadow: inset 0 1px #fafafa; overflow: hidden; }
.toolbar { flex: none; display: flex; align-items: center; padding-right: 3px; border-right: 1px solid #a8a8a8; }
.toolbar:last-child { border-right: 0; }
.toolbar::before { content: ""; flex: none; width: 3px; height: 27px; margin: 0 3px; background: repeating-linear-gradient(#b5b5b5 0 2px, transparent 2px 4px); }
.toolbar button { width: 31px; height: 30px; }
.toolbar svg { width: 24px; height: 24px; }
.toolbar button.drop { width: 43px; padding-right: 12px; }
.drop::after, .corner::after { content: ""; position: absolute; right: 3px; top: 50%; margin-top: -2px; border: 4px solid transparent; border-top-color: #222; border-bottom: 0; }
.corner::after { top: auto; bottom: 5px; right: 1px; border-width: 3px; border-bottom: 0; }
.dim::after { border-top-color: #777; }
button.active { background: #b5d6f2; border: 1px solid #66a7dd; }
.abc { font: bold 8px "DejaVu Sans Condensed", sans-serif; fill: #333; }
.abc.off { fill: #888; }

.toolbar.empty { width: 12px; }
.toolbar.wide { width: 44px; padding: 0; }
.toolbar.wide button { width: 32px; }
.scp button { width: 32px; }
.band { display: flex; align-items: center; gap: 8px; width: 57px; height: 17px; padding-left: 1px; background: linear-gradient(90deg, #444, #a8a8a8); color: #fff; overflow: hidden; white-space: nowrap; flex: none; }
.band input { appearance: none; flex: none; width: 11px; height: 11px; margin: 0; border: 3px solid #fff; border-radius: 50%; background: #111; }
.combo { appearance: none; width: 81px; height: 20px; border: 1px solid #aaa; border-radius: 0; padding: 0 4px; background: #fff; font: inherit; }
.spin { display: flex; align-items: center; flex: none; position: relative; margin-left: 2px; }
.spin input { width: 59px; height: 18px; margin: 0; border: 1px solid #a0a0a0; padding: 0 1px; font: inherit; background: #fff; }
.spin.long input { width: 99px; }
.spin i { position: absolute; right: 1px; top: 1px; width: 14px; height: 16px; background: #eee; border: 1px solid #bbb; }
.spin i::before, .spin i::after { content: ""; position: absolute; left: 3px; top: 2px; border: 3px solid transparent; border-bottom-color: #111; border-top: 0; }
.spin i::after { top: 9px; border: 3px solid transparent; border-top-color: #111; border-bottom: 0; }

main { flex: 1; min-height: 0; display: flex; }
.sources { flex: none; width: 47px; padding-left: 4px; display: flex; flex-direction: column; }
.sources::before { content: ""; width: 38px; height: 3px; margin: 4px 0 3px; flex: none; background: repeating-linear-gradient(90deg, #b5b5b5 0 2px, transparent 2px 4px); }
.sources button { width: 26px; height: 30px; }
.sources svg { width: 24px; height: 24px; }
.sources button.drop { width: 38px; padding-right: 12px; }
.sources .drop::after { right: 0; }

.docks { flex: none; width: 363px; padding-top: 1px; display: flex; flex-direction: column; gap: 5px; }
.dock { display: flex; flex-direction: column; }
.dock.grow { flex: 1; min-height: 0; }
.dock header { height: 19px; flex: none; display: flex; align-items: center; gap: 6px; padding: 0 4px 0 3px; background: #dadada; border: 1px solid #b8b8b8; }
.dock h2 { flex: 1; font-size: 11px; line-height: 14px; padding-top: 2px; }
.dock header svg { width: 10px; height: 10px; display: block; }
.tools { height: 28px; flex: none; display: flex; align-items: center; padding: 1px 0 0 1px; }
.tools button { width: 23px; height: 22px; }
.tools svg { width: 16px; height: 16px; }
.tools button.drop { width: 36px; padding-right: 13px; }
.tools .corner::after { bottom: 2px; }
.view { flex: 1; min-height: 0; display: flex; background: #fff; border: 1px solid #828790; }
.tree { flex: 1; list-style: none; }
.tree li { height: 20px; display: flex; align-items: center; gap: 5px; padding: 2px 0 0 23px; position: relative; }
.tree li:last-child { height: 18px; }
.tree svg, .db2 { width: 16px; height: 16px; flex: none; }
.tree .node::before { content: ""; position: absolute; left: 9px; top: 7px; width: 6px; height: 8px; background: #999; clip-path: polygon(0 0, 100% 50%, 0 100%); }
.tree .node::after { content: ""; position: absolute; left: 10px; top: 9px; width: 3px; height: 4px; background: #fff; clip-path: polygon(0 0, 100% 50%, 0 100%); }
.db2 { background: #5e91c4; color: #fff; border-radius: 1px; font-size: 7px; line-height: 16px; text-align: center; }
.scroll { width: 16px; background: #f0f0f0; display: flex; flex-direction: column; }
.scroll svg { width: 15px; height: 17px; flex: none; }
.thumb { height: 92px; width: 15px; background: #cdcdcd; margin-bottom: auto; }
.layers { flex: 1; padding-top: 1px; font-weight: bold; }
.layers label { display: flex; align-items: center; height: 20px; padding-left: 23px; }
.layers .selected { background: #cbe8f6; border: 1px dotted #222; padding-left: 22px; }
.layers input { appearance: none; width: 13px; height: 13px; margin: 0 6px 0 0; border: 1px solid #555; background: #fff; }
.layers input:checked::before { content: ""; display: block; width: 4px; height: 8px; margin: 0 0 0 3px; border: solid #111; border-width: 0 2px 2px 0; transform: rotate(40deg); }
.swatch { width: 16px; height: 16px; margin-right: 6px; background: #866381; border: 1px solid #5a4358; }
.swatch.edit { background: #568782; border-color: #444; }
.swatch svg { display: block; width: 14px; height: 14px; }

.canvas { flex: 1; min-width: 0; margin-left: 4px; border: 1px solid #7b858c; border-width: 1px 0 0 1px; background: #fff; }
.canvas svg { display: block; width: 100%; height: 100%; }
.land path, .park path, .park circle, .line path { stroke: #2d2930; stroke-width: 3; stroke-linejoin: round; }
.land path { fill: #866381; }
.park path, .park circle { fill: #708d59; }
.line path { fill: none; }

.tooltip { position: absolute; left: 233px; top: 115px; padding: 1px 5px; border: 1px solid #666; background: #fff; color: #555; font-weight: bold; line-height: 15px; box-shadow: 3px 3px 3px rgba(0, 0, 0, .4); white-space: nowrap; }
.marks { position: absolute; left: 0; top: 0; width: 871px; height: 510px; fill: none; stroke: #ed1c24; pointer-events: none; }
```
